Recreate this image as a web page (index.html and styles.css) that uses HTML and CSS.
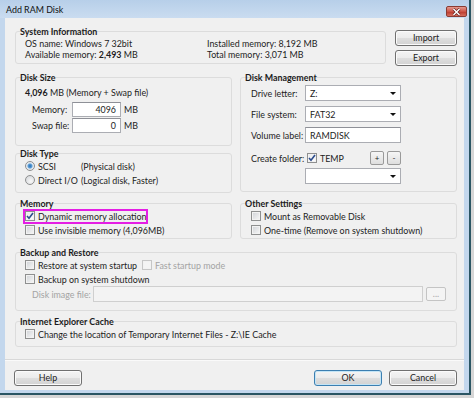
FILE: index.html
```html
<!DOCTYPE html>
<html lang="en">
<head>
    <meta charset="UTF-8">
    <title>Add RAM Disk</title>
    <link rel="stylesheet" href="styles.css">
</head>
<body>
    <div class="window">
        <div class="titlebar">
            <span class="title">Add RAM Disk</span>
            <span class="close-btn">
                <svg width="9" height="8" viewBox="0 0 9 8"><path d="M1.5 1 L7.5 7 M7.5 1 L1.5 7" stroke="#5a1a1a" stroke-width="2.6"/><path d="M1.5 1 L7.5 7 M7.5 1 L1.5 7" stroke="#fff" stroke-width="1.5"/></svg>
            </span>
        </div>

        <div class="client">
            <div class="top-row">
                <div class="group sysinfo">
                    <div class="group-title">System Information</div>
                    <div class="info-grid">
                        <div>OS name: Windows 7 32bit</div>
                        <div>Installed memory: 8,192 MB</div>
                        <div>Available memory: <b>2,493</b> MB</div>
                        <div>Total memory: 3,071 MB</div>
                    </div>
                </div>
                <div class="side-buttons">
                    <span class="btn side-btn">Import</span>
                    <span class="btn side-btn">Export</span>
                </div>
            </div>

            <div class="mid">
                <div class="left-stack">
                    <div class="group disk-size">
                        <div class="group-title">Disk Size</div>
                        <div class="ds-total"><b>4,096</b> MB (Memory + Swap file)</div>
                        <div class="size-row">
                            <span class="size-label">Memory:</span>
                            <span class="textbox num">4096</span>
                            <span class="unit">MB</span>
                        </div>
                        <div class="size-row">
                            <span class="size-label">Swap file:</span>
                            <span class="textbox num">0</span>
                            <span class="unit">MB</span>
                        </div>
                    </div>

                    <div class="group disk-type">
                        <div class="group-title">Disk Type</div>
                        <div class="opt-row">
                            <span class="radio checked"></span>
                            <span class="radio-name">SCSI</span>
                            <span>(Physical disk)</span>
                        </div>
                        <div class="opt-row">
                            <span class="radio"></span>
                            <span class="radio-name">Direct I/O</span>
                            <span>(Logical disk, Faster)</span>
                        </div>
                    </div>
                </div>

                <div class="group disk-mgmt">
                    <div class="group-title">Disk Management</div>
                    <div class="mgmt-row first">
                        <span class="mgmt-label">Drive letter:</span>
                        <span class="select">Z:<i class="arrow"></i></span>
                    </div>
                    <div class="mgmt-row">
                        <span class="mgmt-label">File system:</span>
                        <span class="select">FAT32<i class="arrow"></i></span>
                    </div>
                    <div class="mgmt-row">
                        <span class="mgmt-label">Volume label:</span>
                        <span class="textbox vol">RAMDISK</span>
                    </div>
                    <div class="mgmt-row folder-row">
                        <span class="mgmt-label">Create folder:</span>
                        <span class="folder-ctrl">
                            <span class="cb checked"><svg width="8" height="8" viewBox="0 0 8 8"><path d="M1 4 L3 6.2 L7 1" fill="none" stroke="#2c4c8c" stroke-width="1.6"/></svg></span>
                            <span class="temp">TEMP</span>
                            <span class="mini-btn">+</span>
                            <span class="mini-btn">-</span>
                        </span>
                    </div>
                    <div class="mgmt-row last">
                        <span class="select"><i class="arrow"></i></span>
                    </div>
                </div>

                <div class="group memory">
                    <div class="group-title">Memory</div>
                    <div class="opt-row">
                        <span class="highlight">
                            <span class="cb checked"><svg width="8" height="8" viewBox="0 0 8 8"><path d="M1 4 L3 6.2 L7 1" fill="none" stroke="#2c4c8c" stroke-width="1.6"/></svg></span>
                            <span>Dynamic memory allocation</span>
                        </span>
                    </div>
                    <div class="opt-row">
                        <span class="cb"></span>
                        <span>Use invisible memory (4,096MB)</span>
                    </div>
                </div>

                <div class="group other">
                    <div class="group-title">Other Settings</div>
                    <div class="opt-row">
                        <span class="cb"></span>
                        <span>Mount as Removable Disk</span>
                    </div>
                    <div class="opt-row">
                        <span class="cb"></span>
                        <span>One-time (Remove on system shutdown)</span>
                    </div>
                </div>
            </div>

            <div class="group backup">
                <div class="group-title">Backup and Restore</div>
                <div class="opt-row">
                    <span class="restore-item">
                        <span class="cb"></span>
                        <span>Restore at system startup</span>
                    </span>
                    <span class="cb disabled"></span>
                    <span class="muted">Fast startup mode</span>
                </div>
                <div class="opt-row">
                    <span class="cb"></span>
                    <span>Backup on system shutdown</span>
                </div>
                <div class="image-row">
                    <span class="image-label muted">Disk image file:</span>
                    <span class="textbox image-path"></span>
                    <span class="browse-btn">...</span>
                </div>
            </div>

            <div class="group ie-cache">
                <div class="group-title">Internet Explorer Cache</div>
                <div class="opt-row">
                    <span class="cb"></span>
                    <span>Change the location of Temporary Internet Files - Z:\IE Cache</span>
                </div>
            </div>

            <div class="separator"></div>

            <div class="footer">
                <span class="btn help-btn">Help</span>
                <span class="btn ok-btn">OK</span>
                <span class="btn">Cancel</span>
            </div>
        </div>
    </div>
</body>
</html>
```

FILE: styles.css
```css
* {
    box-sizing: border-box;
}

body {
    margin: 0;
    background: #d6d6d6;
    font-family: Lato, "Open Sans", sans-serif;
    font-size: 8.9px;
    color: #1c1c1c;
    white-space: nowrap;
}

.window {
    width: 471px;
    height: 395px;
    background: #c3d7ed;
    border-right: 2px solid #2a5563;
    border-bottom: 2px solid #2a5563;
    display: flex;
    flex-direction: column;
}

.titlebar {
    height: 18px;
    flex-shrink: 0;
    display: flex;
    align-items: flex-start;
    padding-left: 6px;
    background: linear-gradient(#b7cfe9, #cadcf0);
}

.title {
    margin-top: 4px;
    line-height: 12px;
    color: #111;
}

.close-btn {
    margin-left: auto;
    margin-right: 2px;
    margin-top: 6px;
    width: 21px;
    height: 11px;
    border: 1px solid #8a3b33;
    border-radius: 2px;
    background: linear-gradient(#e59a8f, #cc5447 50%, #b8382c 51%, #d66d5d);
    display: flex;
    align-items: center;
    justify-content: center;
}

.client {
    flex: 1;
    margin: 0 5px 3px 5px;
    background: #f0f0f0;
    padding: 0 7px 0 10px;
    display: flex;
    flex-direction: column;
}

/* controls */
.btn {
    width: 68px;
    height: 16px;
    border: 1px solid #707070;
    border-radius: 3px;
    background: linear-gradient(#f4f4f4, #ececec 48%, #dedede 52%, #d2d2d2);
    box-shadow: inset 0 0 0 1px #fbfbfb;
    display: flex;
    align-items: center;
    justify-content: center;
    line-height: 12px;
}

.ok-btn {
    border-color: #3c7fb1;
    box-shadow: inset 0 0 0 1px #c4e5f6;
}

.textbox {
    display: flex;
    align-items: center;
    height: 15px;
    border: 1px solid #abadb3;
    border-top-color: #8e9097;
    background: #fff;
}

.textbox.num {
    width: 49px;
    justify-content: flex-end;
    padding-right: 4px;
}

.textbox.vol {
    width: 96px;
    height: 16px;
    padding-left: 4px;
}

.select {
    width: 96px;
    height: 16px;
    display: flex;
    align-items: center;
    padding-left: 4px;
    border: 1px solid #abadb3;
    background: #fff;
}

.arrow {
    margin-left: auto;
    margin-right: 4px;
    border-top: 3px solid #111;
    border-left: 3px solid transparent;
    border-right: 3px solid transparent;
}

.cb {
    width: 10px;
    height: 10px;
    flex-shrink: 0;
    margin-right: 3px;
    border: 1px solid #8e8f8f;
    background: linear-gradient(135deg, #cfd2d6, #f8f8f8);
    box-shadow: inset 0 0 0 1px #f2f2f2;
    display: flex;
    align-items: center;
    justify-content: center;
}

.cb.checked {
    background: linear-gradient(135deg, #e6e8eb, #ffffff);
}

.cb.disabled {
    border-color: #c6c6c6;
    background: #f4f4f4;
}

.radio {
    width: 10px;
    height: 10px;
    flex-shrink: 0;
    margin-right: 3px;
    border: 1px solid #8e8f8f;
    border-radius: 50%;
    background: radial-gradient(circle at 60% 65%, #f8f8f8, #cfd2d6);
}

.radio.checked {
    background: radial-gradient(circle, #2f6fb2 0, #5b9fd8 2px, #dfe6ee 3px, #f2f2f2 5px);
}

.muted {
    color: #a3a3a3;
}

/* group boxes */
.group {
    border: 1px solid #dcdcdc;
    border-radius: 3px;
}

.group-title {
    font-weight: bold;
    margin: -7px 0 0 4px;
    line-height: 13px;
}

.top-row {
    display: flex;
    align-items: flex-start;
    margin-top: 13px;
}

.sysinfo {
    width: 371px;
    height: 33px;
}

.info-grid {
    display: grid;
    grid-template-columns: 182px auto;
    padding-left: 9px;
    line-height: 11px;
}

.side-buttons {
    margin-left: auto;
    margin-top: -1px;
    display: flex;
    flex-direction: column;
    gap: 4px;
}

.side-btn {
    width: 62px;
}

.mid {
    display: grid;
    grid-template-columns: 217px 217px;
    column-gap: 8px;
    row-gap: 10px;
    margin-top: 11px;
}

.disk-size {
    height: 69px;
}

.ds-total {
    margin: 2px 0 0 9px;
    line-height: 13px;
}

.size-row {
    display: flex;
    align-items: center;
    padding-left: 16px;
    margin-top: 1px;
}

.ds-total + .size-row {
    margin-top: 3px;
}

.size-label {
    width: 40px;
    flex-shrink: 0;
}

.unit {
    margin-left: 3px;
}

.disk-type {
    height: 40px;
    margin-top: 7px;
}

.opt-row {
    display: flex;
    align-items: center;
    height: 14px;
    padding-left: 9px;
}

.group-title + .opt-row {
    margin-top: -1px;
}

.radio-name {
    min-width: 41px;
    margin-right: 2px;
    flex-shrink: 0;
}

.disk-mgmt {
    height: 115px;
}

.mgmt-row {
    display: flex;
    align-items: center;
    padding-left: 10px;
    margin-top: 5px;
}

.mgmt-row.first {
    margin-top: 1px;
}

.mgmt-row.folder-row {
    margin-top: 8px;
}

.mgmt-row.last {
    margin-top: 3px;
    padding-left: 64px;
}

.mgmt-label {
    width: 54px;
    flex-shrink: 0;
}

.folder-ctrl {
    width: 96px;
    display: flex;
    align-items: center;
    padding-left: 2px;
}

.temp {
    margin-right: auto;
}

.mini-btn {
    width: 14px;
    height: 14px;
    margin-left: 3px;
    border: 1px solid #9a9a9a;
    border-radius: 2px;
    background: linear-gradient(#f6f6f6, #dedede);
    display: flex;
    align-items: center;
    justify-content: center;
    font-size: 8px;
    line-height: 8px;
}

.memory,
.other {
    height: 36px;
}

.other .opt-row {
    padding-left: 10px;
}

.highlight {
    display: inline-flex;
    align-items: center;
    height: 11px;
    outline: 2px solid #e41ee4;
}

.backup {
    height: 59px;
    margin-top: 13px;
}

.restore-item {
    display: flex;
    align-items: center;
    width: 117px;
    flex-shrink: 0;
}

.image-row {
    display: flex;
    align-items: center;
    padding-left: 16px;
}

.image-label {
    width: 61px;
    flex-shrink: 0;
}

.image-path {
    width: 330px;
    height: 16px;
    border-color: #cfcfcf;
    background: #f3f3f3;
}

.browse-btn {
    width: 20px;
    height: 14px;
    margin-left: 3px;
    border: 1px solid #c4c4c4;
    border-radius: 2px;
    background: #f4f4f4;
    color: #a8a8a8;
    display: flex;
    align-items: center;
    justify-content: center;
    line-height: 8px;
}

.ie-cache {
    height: 26px;
    margin-top: 10px;
}

.separator {
    margin: 12px -7px 0 -10px;
    border-top: 1px solid #d8d8d8;
    border-bottom: 1px solid #fafafa;
}

.footer {
    display: flex;
    gap: 7px;
    margin-top: 9px;
}

.help-btn {
    margin-left: -1px;
    margin-right: auto;
}
```
